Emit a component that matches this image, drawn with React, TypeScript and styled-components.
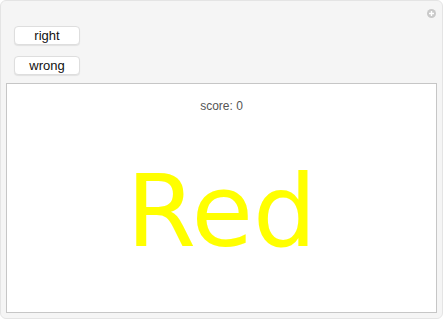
import React from "react";
import styled, { createGlobalStyle } from "styled-components";

const GlobalStyle = createGlobalStyle`
  html, body {
    margin: 0;
    padding: 0;
    background: #ffffff;
  }
`;

const Panel = styled.div`
  position: relative;
  box-sizing: border-box;
  width: 443px;
  height: 319px;
  background: #f5f5f5;
  border: 1px solid #e4e4e4;
  border-radius: 6px;
  padding: 0 5px 5px 5px;
  display: flex;
  flex-direction: column;
`;

const AddIcon = styled.div`
  position: absolute;
  top: 8px;
  right: 6px;
  width: 9px;
  height: 9px;
  border-radius: 50%;
  background: #c9c9c9;
  display: flex;
  align-items: center;
  justify-content: center;
`;

const Controls = styled.div`
  display: flex;
  flex-direction: column;
  align-items: flex-start;
  gap: 11px;
  padding: 25px 0 8px 8px;
`;

const Button = styled.button`
  box-sizing: border-box;
  width: 66px;
  height: 19px;
  padding: 0;
  background: #ffffff;
  border: 1px solid #dedede;
  border-radius: 4px;
  box-shadow: 0 1px 1px rgba(0, 0, 0, 0.08);
  font-family: "Liberation Sans", Arial, sans-serif;
  font-size: 13px;
  color: #111;
  line-height: 17px;
  cursor: pointer;
`;

const Pane = styled.div`
  flex: 1;
  box-sizing: border-box;
  background: #ffffff;
  border: 1px solid #c6c6c6;
  display: flex;
  flex-direction: column;
  align-items: center;
  padding-top: 15px;
`;

const Score = styled.div`
  font-family: "Liberation Sans", Arial, sans-serif;
  font-size: 12px;
  line-height: 14px;
  color: #555555;
`;

const Word = styled.div<{ $color: string }>`
  margin-top: 40px;
  font-family: "DejaVu Sans", sans-serif;
  font-size: 100px;
  line-height: normal;
  color: ${(p) => p.$color};
`;

export default function App() {
  return (
    <>
      <GlobalStyle />
      <Panel>
        <AddIcon>
          <svg width="7" height="7" viewBox="0 0 7 7">
            <path d="M3.5 1v5M1 3.5h5" stroke="#fff" strokeWidth="1.4" />
          </svg>
        </AddIcon>
        <Controls>
          <Button>right</Button>
          <Button>wrong</Button>
        </Controls>
        <Pane>
          <Score>score: 0</Score>
          <Word $color="#ffff00">Red</Word>
        </Pane>
      </Panel>
    </>
  );
}
